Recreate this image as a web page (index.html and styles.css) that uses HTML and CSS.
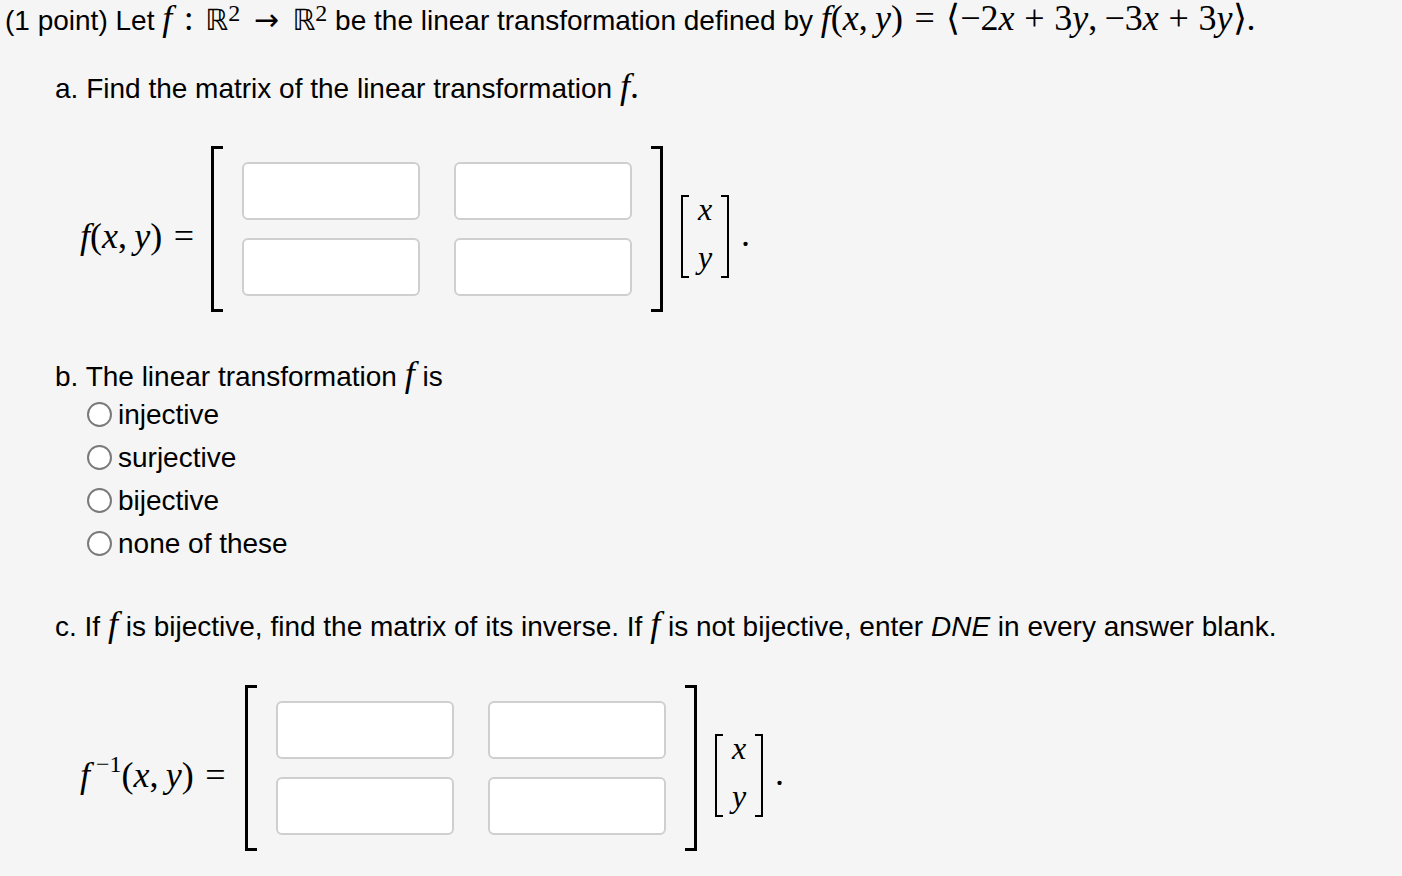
FILE: index.html
```html
<!DOCTYPE html>
<html>
<head>
<meta charset="utf-8">
<link rel="stylesheet" href="styles.css">
</head>
<body>
<div class="page">
  <div class="title">(1 point) Let <span class="m"><i>f</i><span class="rel">:</span><span class="bb">ℝ</span><sup>2</sup><span class="rel arrow">→</span><span class="bb">ℝ</span><sup>2</sup></span> be the linear transformation defined by <span class="m"><i>f</i>(<i>x</i>,<span class="th"></span><i>y</i>)<span class="rel">=</span>⟨−2<i>x</i><span class="op">+</span>3<i>y</i>,<span class="th"></span>−3<i>x</i><span class="op">+</span>3<i>y</i>⟩.</span></div>

  <div class="part">
    <div class="line a-line">a. Find the matrix of the linear transformation <span class="m"><i>f</i>.</span></div>

    <div class="eq eq-a">
      <div class="label m"><i>f</i>(<i>x</i>,<span class="th"></span><i>y</i>)<span class="rel">=</span></div>
      <div class="bracket left"></div>
      <div class="grid">
        <input class="cell" type="text">
        <input class="cell" type="text">
        <input class="cell" type="text">
        <input class="cell" type="text">
      </div>
      <div class="bracket right"></div>
      <div class="vbr left"></div>
      <div class="vec m"><i>x</i><i>y</i></div>
      <div class="vbr right"></div>
      <div class="dot m">.</div>
    </div>

    <div class="line b-line">b. The linear transformation <span class="m"><i>f</i></span> is</div>
    <div class="radios">
      <label class="opt"><span class="circle"></span>injective</label>
      <label class="opt"><span class="circle"></span>surjective</label>
      <label class="opt"><span class="circle"></span>bijective</label>
      <label class="opt"><span class="circle"></span>none of these</label>
    </div>

    <div class="line c-line">c. If <span class="m"><i>f</i></span> is bijective, find the matrix of its inverse. If <span class="m"><i>f</i></span> is not bijective, enter <i>DNE</i> in every answer blank.</div>

    <div class="eq eq-c">
      <div class="label m label-c"><i>f</i><sup class="inv">−1</sup>(<i>x</i>,<span class="th"></span><i>y</i>)<span class="rel">=</span></div>
      <div class="bracket left"></div>
      <div class="grid">
        <input class="cell" type="text">
        <input class="cell" type="text">
        <input class="cell" type="text">
        <input class="cell" type="text">
      </div>
      <div class="bracket right"></div>
      <div class="vbr left"></div>
      <div class="vec m"><i>x</i><i>y</i></div>
      <div class="vbr right"></div>
      <div class="dot m">.</div>
    </div>
  </div>
</div>
</body>
</html>
```

FILE: styles.css
```css
html, body {
  margin: 0;
  padding: 0;
  background: #f5f5f5;
}
.page {
  font-family: "Liberation Sans", Arial, sans-serif;
  font-size: 28px;
  color: #000;
  padding: 3px 0 0 5px;
}
.title {
  height: 28px;
  line-height: 30px;
  white-space: nowrap;
}
.m {
  font-family: "Liberation Serif", "Times New Roman", serif;
  font-size: 36px;
}
.rel {
  display: inline-block;
  margin: 0 0.32em;
}
.arrow {
  font-family: "DejaVu Sans", sans-serif;
  font-size: 30px;
  margin: 0 0.45em;
}
.op {
  display: inline-block;
  margin: 0 0.27em;
}
.th {
  display: inline-block;
  width: 0.2em;
}
.bb {
  font-family: "DejaVu Sans", sans-serif;
  font-size: 29px;
}
sup {
  font-size: 24px;
  line-height: 0;
  vertical-align: 9px;
}
.part {
  padding-left: 50px;
}
.line {
  height: 28px;
  line-height: 28px;
  white-space: nowrap;
}
.a-line { margin-top: 41px; }
.eq {
  display: flex;
  align-items: center;
  margin-top: 46px;
}
.eq-a { padding-left: 25px; }
.eq-c { padding-left: 25px; margin-top: 47px; }
.label {
  width: 131px;
  padding-top: 14px;
  white-space: nowrap;
}
.label-c { width: 165px; }
.inv { font-size: 24px; vertical-align: 15px; margin-left: 6px; }
.bracket {
  width: 9px;
  height: 160px;
  border-top: 3px solid #000;
  border-bottom: 3px solid #000;
}
.bracket.left { border-left: 3px solid #000; }
.bracket.right { border-right: 3px solid #000; }
.grid {
  display: grid;
  grid-template-columns: 178px 178px;
  column-gap: 34px;
  row-gap: 18px;
  padding: 0 19px;
}
.cell {
  box-sizing: border-box;
  width: 178px;
  height: 58px;
  margin: 0;
  background: #fff;
  border: 2px solid #cfcfcf;
  border-radius: 6px;
  outline: none;
}
.vbr {
  width: 6px;
  height: 79px;
  border-top: 2px solid #000;
  border-bottom: 2px solid #000;
  margin-top: 14px;
}
.vbr.left { border-left: 2px solid #000; margin-left: 18px; }
.vbr.right { border-right: 2px solid #000; }
.vec {
  display: flex;
  flex-direction: column;
  align-items: center;
  width: 32px;
  font-size: 32px;
  line-height: 48px;
  margin-top: 8px;
}
.dot {
  margin-left: 12px;
  margin-top: 10px;
  font-style: normal;
}
.b-line { margin-top: 48px; }
.radios {
  display: flex;
  flex-direction: column;
  padding-left: 32px;
  margin-top: 5px;
}
.opt {
  display: flex;
  align-items: center;
  height: 43px;
  line-height: 28px;
}
.circle {
  box-sizing: border-box;
  width: 25px;
  height: 25px;
  border: 2px solid #7a7a7a;
  border-radius: 50%;
  background: #fff;
  margin-right: 6px;
}
.c-line { margin-top: 45px; }
```
